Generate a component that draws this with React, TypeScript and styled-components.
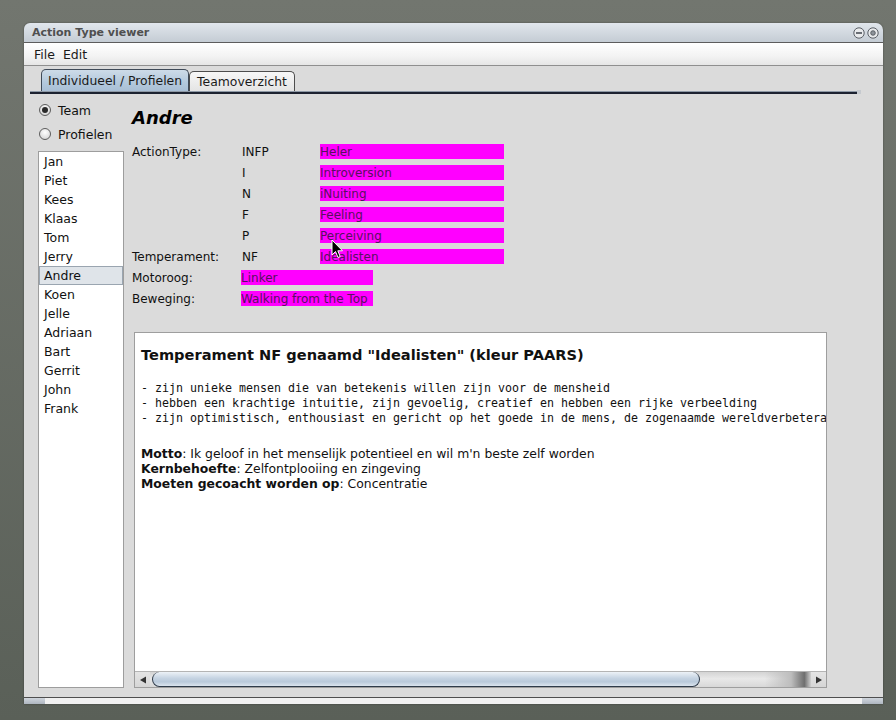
import React from "react";
import styled, { createGlobalStyle } from "styled-components";

const GlobalStyle = createGlobalStyle`
  html, body { margin: 0; padding: 0; }
  body {
    width: 896px;
    height: 720px;
    overflow: hidden;
    background: linear-gradient(#72766f, #5a6058);
    font-family: "DejaVu Sans", "Liberation Sans", sans-serif;
    font-size: 12px;
    color: #111;
  }
`;

const Page = styled.div`
  position: relative;
  width: 896px;
  height: 720px;
  box-sizing: border-box;
  padding: 23px 0 0 24px;
`;

const Window = styled.div`
  width: 859px;
  height: 681px;
  display: flex;
  flex-direction: column;
  border-radius: 6px 7px 0 0;
  overflow: hidden;
  box-shadow: 0 0 2px rgba(0, 0, 0, 0.4);
`;

const TitleBar = styled.div`
  height: 19px;
  flex: none;
  display: flex;
  align-items: center;
  justify-content: space-between;
  padding: 0 4px 0 8px;
  background: linear-gradient(#e1e6ec, #c4ccd4);
  border-bottom: 1px solid #5c5c5c;
  font-weight: bold;
  font-size: 11px;
  color: #4f4f4f;
`;

const TitleControls = styled.div`
  display: flex;
  gap: 2px;
  align-items: center;
`;

const MenuBar = styled.div`
  height: 22px;
  flex: none;
  display: flex;
  align-items: center;
  gap: 8px;
  padding-left: 10px;
  background: linear-gradient(#ffffff, #f3f3f3 60%, #e6e6e6);
  border-bottom: 1px solid #8f8f8f;
  font-size: 12.5px;
  color: #1a1a1a;
`;

const Body = styled.div`
  flex: 1;
  display: flex;
  flex-direction: column;
  background: #dbdbdb;
  min-height: 0;
`;

const TabRow = styled.div`
  display: flex;
  align-items: flex-end;
  padding: 3px 0 0 17px;
  height: 22px;
`;

const Tab = styled.div<{ $active?: boolean }>`
  height: ${(p) => (p.$active ? "22px" : "20px")};
  box-sizing: border-box;
  display: flex;
  align-items: center;
  padding: 0 ${(p) => (p.$active ? "6px" : "7px")} 0 ${(p) => (p.$active ? "6px" : "7px")};
  border: 1px solid ${(p) => (p.$active ? "#3f4a58" : "#4d4d4d")};
  border-bottom: none;
  border-radius: 5px 5px 0 0;
  background: ${(p) =>
    p.$active
      ? "linear-gradient(#cddbe8, #b3c8dc 60%, #a9bfd5)"
      : "linear-gradient(#f7f7f7, #e4e4e4)"};
  font-size: 12.4px;
  color: #1a1a1a;
`;

const TabLine = styled.div`
  margin-left: 6px;
  width: 827px;
  height: 1px;
  background: #8e99a6;
  border-bottom: 2px solid #1c2230;
  position: relative;
  &::after {
    content: "";
    position: absolute;
    right: -4px;
    top: -1px;
    width: 4px;
    height: 4px;
    background: #b8bec6;
    opacity: 0.6;
  }
`;

const Content = styled.div`
  flex: 1;
  display: flex;
  min-height: 0;
  padding: 4px 0 9px 14px;
`;

const LeftCol = styled.div`
  width: 86px;
  display: flex;
  flex-direction: column;
`;

const RadioRow = styled.div`
  height: 24px;
  display: flex;
  align-items: center;
  gap: 7px;
  padding-left: 1px;
  font-size: 12.5px;
`;

const RadioCircle = styled.span<{ $checked?: boolean }>`
  width: 12px;
  height: 12px;
  box-sizing: border-box;
  border-radius: 50%;
  border: 1px solid #5d5d5d;
  background: radial-gradient(circle at 50% 35%, #ffffff, #dcdcdc 70%, #c4c4c4);
  display: flex;
  align-items: center;
  justify-content: center;
  &::after {
    content: "";
    display: ${(p) => (p.$checked ? "block" : "none")};
    width: 6px;
    height: 6px;
    border-radius: 50%;
    background: #2a2a2a;
  }
`;

const NameList = styled.div`
  margin-top: 5px;
  flex: 1;
  background: #fff;
  border: 1px solid #9d9d9d;
  display: flex;
  flex-direction: column;
`;

const NameItem = styled.div<{ $selected?: boolean }>`
  height: 19px;
  box-sizing: border-box;
  display: flex;
  align-items: center;
  padding-left: ${(p) => (p.$selected ? "4px" : "5px")};
  font-size: 12.5px;
  background: ${(p) => (p.$selected ? "#dfe4e9" : "transparent")};
  border: ${(p) => (p.$selected ? "1px solid #9aa5b0" : "none")};
`;

const RightCol = styled.div`
  flex: none;
  width: 695px;
  margin-left: 8px;
  padding-top: 8px;
  display: flex;
  flex-direction: column;
`;

const PersonName = styled.div`
  height: 24px;
  line-height: 24px;
  font-size: 18px;
  font-weight: bold;
  font-style: italic;
  color: #000;
`;

const InfoGrid = styled.div`
  margin-top: 11px;
  display: grid;
  grid-template-columns: 110px 78px 184px;
  grid-auto-rows: 21px;
  align-items: center;
`;

const Label = styled.div`
  font-size: 12px;
  color: #111;
`;

const Bar = styled.div<{ $wide?: boolean }>`
  height: 15px;
  line-height: 16px;
  background: #ff00ff;
  color: #581060;
  font-size: 12px;
  white-space: nowrap;
  overflow: hidden;
  width: ${(p) => (p.$wide ? "132px" : "184px")};
  margin-left: ${(p) => (p.$wide ? "-1px" : "0")};
  grid-column: ${(p) => (p.$wide ? "2 / span 2" : "auto")};
`;

const TextPanel = styled.div`
  margin: 23px 0 0 2px;
  flex: 1;
  background: #fff;
  border: 1px solid #9e9e9e;
  display: flex;
  flex-direction: column;
  min-height: 0;
`;

const PanelBody = styled.div`
  flex: 1;
  overflow: hidden;
  padding: 13px 0 0 6px;
`;

const PanelHeading = styled.div`
  font-size: 14.6px;
  font-weight: bold;
  line-height: 18px;
  color: #111;
  white-space: nowrap;
`;

const MonoBlock = styled.pre`
  margin: 17px 0 0 0;
  font-family: "DejaVu Sans Mono", "Liberation Mono", monospace;
  font-size: 11.63px;
  line-height: 15px;
  color: #111;
  white-space: pre;
`;

const InfoBlock = styled.div`
  margin-top: 20px;
  font-size: 12.4px;
  line-height: 15px;
  color: #111;
  white-space: nowrap;
  b { font-weight: bold; }
`;

const HScroll = styled.div`
  height: 15px;
  flex: none;
  display: flex;
  align-items: stretch;
  background: linear-gradient(#d2d2d2, #e6e6e6 40%, #dcdcdc);
  border-top: 1px solid #b4b4b4;
`;

const ArrowButton = styled.div`
  width: 15px;
  flex: none;
  display: flex;
  align-items: center;
  justify-content: center;
  background: linear-gradient(#e4e4e4, #d6d6d6);
`;

const Track = styled.div`
  flex: 1;
  display: flex;
  padding-left: 2px;
  background: linear-gradient(90deg, transparent 93%, #bdbdbd 97%, #6f6f6f 99%, #d0d0d0 100%), linear-gradient(#d4d4d4, #e8e8e8 45%, #d8d8d8);
`;

const Thumb = styled.div`
  box-sizing: border-box;
  height: 100%;
  border: 1px solid #2f3b4a;
  border-top: none;
  border-radius: 9px;
  background: linear-gradient(#edf2f7, #c5d3e2 45%, #b9c9da 70%, #dbe4ee);
`;

const Footer = styled.div`
  height: 6px;
  flex: none;
  border-top: 1px solid #4f4f4f;
  background: #f1f1f1;
  display: flex;
  justify-content: space-between;
`;

const FooterGrip = styled.div`
  width: 21px;
  background: linear-gradient(#cfd5dc, #aeb6c0);
`;

const Cursor = styled.svg`
  position: absolute;
  left: 331px;
  top: 239px;
`;

const TitleButton: React.FC<{ kind: "min" | "close" }> = ({ kind }) => (
  <svg width="12" height="12" viewBox="0 0 12 12">
    <circle cx="6" cy="6" r="5.2" fill="#e8eaec" stroke="#5a5f66" strokeWidth="1" />
    {kind === "min" ? (
      <rect x="3" y="5.2" width="6" height="1.6" fill="#4a4f56" />
    ) : (
      <circle cx="6" cy="6" r="2.3" fill="#8d939a" stroke="#4a4f56" strokeWidth="0.8" />
    )}
  </svg>
);

const names = [
  "Jan", "Piet", "Kees", "Klaas", "Tom", "Jerry", "Andre",
  "Koen", "Jelle", "Adriaan", "Bart", "Gerrit", "John", "Frank",
];

const typeRows: [string, string, string][] = [
  ["ActionType:", "INFP", "Heler"],
  ["", "I", "Introversion"],
  ["", "N", "iNuiting"],
  ["", "F", "Feeling"],
  ["", "P", "Perceiving"],
  ["Temperament:", "NF", "Idealisten"],
];

const monoText = [
  "- zijn unieke mensen die van betekenis willen zijn voor de mensheid",
  "- hebben een krachtige intuitie, zijn gevoelig, creatief en hebben een rijke verbeelding",
  "- zijn optimistisch, enthousiast en gericht op het goede in de mens, de zogenaamde wereldverbeteraars",
].join("\n");

export default function App() {
  return (
    <Page>
      <GlobalStyle />
      <Window>
        <TitleBar>
          <span>Action Type viewer</span>
          <TitleControls>
            <TitleButton kind="min" />
            <TitleButton kind="close" />
          </TitleControls>
        </TitleBar>
        <MenuBar>
          <span>File</span>
          <span>Edit</span>
        </MenuBar>
        <Body>
          <TabRow>
            <Tab $active>Individueel / Profielen</Tab>
            <Tab>Teamoverzicht</Tab>
          </TabRow>
          <TabLine />
          <Content>
            <LeftCol>
              <RadioRow>
                <RadioCircle $checked />
                Team
              </RadioRow>
              <RadioRow>
                <RadioCircle />
                Profielen
              </RadioRow>
              <NameList>
                {names.map((n) => (
                  <NameItem key={n} $selected={n === "Andre"}>
                    {n}
                  </NameItem>
                ))}
              </NameList>
            </LeftCol>
            <RightCol>
              <PersonName>Andre</PersonName>
              <InfoGrid>
                {typeRows.map(([l, v, b], i) => (
                  <React.Fragment key={i}>
                    <Label>{l}</Label>
                    <Label>{v}</Label>
                    <Bar>{b}</Bar>
                  </React.Fragment>
                ))}
                <Label>Motoroog:</Label>
                <Bar $wide>Linker</Bar>
                <Label>Beweging:</Label>
                <Bar $wide>Walking from the Top</Bar>
              </InfoGrid>
              <TextPanel>
                <PanelBody>
                  <PanelHeading>Temperament NF genaamd "Idealisten" (kleur PAARS)</PanelHeading>
                  <MonoBlock>{monoText}</MonoBlock>
                  <InfoBlock>
                    <div>
                      <b>Motto</b>: Ik geloof in het menselijk potentieel en wil m'n beste zelf worden
                    </div>
                    <div>
                      <b>Kernbehoefte</b>: Zelfontplooiing en zingeving
                    </div>
                    <div>
                      <b>Moeten gecoacht worden op</b>: Concentratie
                    </div>
                  </InfoBlock>
                </PanelBody>
                <HScroll>
                  <ArrowButton>
                    <svg width="8" height="8" viewBox="0 0 8 8">
                      <path d="M1 4 L7 0.5 L7 7.5 Z" fill="#333" />
                    </svg>
                  </ArrowButton>
                  <Track>
                    <Thumb style={{ width: 548 }} />
                  </Track>
                  <ArrowButton>
                    <svg width="8" height="8" viewBox="0 0 8 8">
                      <path d="M7 4 L1 0.5 L1 7.5 Z" fill="#333" />
                    </svg>
                  </ArrowButton>
                </HScroll>
              </TextPanel>
            </RightCol>
          </Content>
          <Footer>
            <FooterGrip />
            <FooterGrip />
          </Footer>
        </Body>
      </Window>
      <Cursor width="13" height="20" viewBox="0 0 13 20">
        <path d="M1 1 L1 16 L4.5 12.5 L7 18.5 L9.2 17.5 L6.8 11.8 L11.5 11.8 Z" fill="#000" stroke="#fff" strokeWidth="1" />
      </Cursor>
    </Page>
  );
}
